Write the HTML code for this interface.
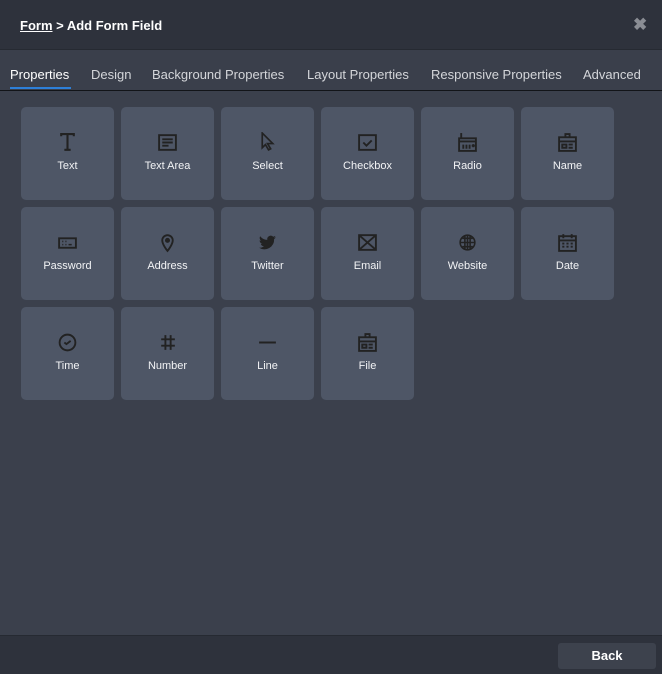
<!DOCTYPE html>
<html><head><meta charset="utf-8"><style>
*{margin:0;padding:0;box-sizing:border-box}
body{width:662px;height:674px;background:#3b404c;font-family:"Liberation Sans",sans-serif;position:relative;overflow:hidden}
.hd{position:absolute;left:0;top:0;width:662px;height:50px;background:#2e323c;border-bottom:1px solid #262a32}
.hd .t{position:absolute;left:20px;top:18px;color:#fff;font-weight:bold;font-size:13px}
.hd .t u{text-decoration:underline}
.x{position:absolute;left:633px;top:15px;color:#8a8d94;font-size:17px;font-weight:bold}
.tabs{position:absolute;left:0;top:50px;width:662px;height:41px;border-bottom:1px solid #121418;background:#3a3f4b}
.tab{position:absolute;top:17px;color:#d4d6da;font-size:13px}
.tab.a{color:#fff}
.ul{position:absolute;left:10px;top:87px;width:61px;height:2px;background:#2d7fd8}
.tile{position:absolute;width:93px;height:93px;background:#4e5666;border-radius:5px}
.tile svg{position:absolute;left:36px;top:25px;width:21px;height:21px}
.tile span{position:absolute;left:0;right:0;top:53px;text-align:center;color:#f2f3f5;font-size:11px}
.ft{position:absolute;left:0;top:635px;width:662px;height:39px;background:#2e323c;border-top:1px solid #262a32}
.bk{position:absolute;left:558px;top:7px;width:98px;height:26px;background:#3d424d;border-radius:3px;color:#fff;font-weight:bold;font-size:13px;text-align:center;line-height:26px}
</style></head><body>
<div class="hd"><div class="t"><u>Form</u> &gt; Add Form Field</div><div class="x">✖</div></div>
<div class="tabs">
<div class="tab a" style="left:10px">Properties</div>
<div class="tab" style="left:91px">Design</div>
<div class="tab" style="left:152px">Background Properties</div>
<div class="tab" style="left:307px">Layout Properties</div>
<div class="tab" style="left:431px">Responsive Properties</div>
<div class="tab" style="left:583px">Advanced</div>
</div>
<div class="ul"></div>

<div class="tile" style="left:21px;top:107px"><svg viewBox="0 0 20 20" fill="none" stroke="#222" stroke-width="2"><path d="M4 4V2h12v2M10 2v15M7 17h6"/></svg><span>Text</span></div>
<div class="tile" style="left:121px;top:107px"><svg viewBox="0 0 20 20" fill="none" stroke="#222" stroke-width="1.8"><rect x="2" y="3" width="16" height="14"/><path d="M5 7h10M5 10h10M5 13h6"/></svg><span>Text Area</span></div>
<div class="tile" style="left:221px;top:107px"><svg viewBox="0 0 20 20" fill="none" stroke="#222" stroke-width="1.6"><path d="M5 1v14l3-3 3 5 2-1-3-5h5z"/></svg><span>Select</span></div>
<div class="tile" style="left:321px;top:107px"><svg viewBox="0 0 20 20" fill="none" stroke="#222" stroke-width="1.8"><rect x="2" y="3" width="16" height="14"/><path d="M6 10l3 3 5-5"/></svg><span>Checkbox</span></div>
<div class="tile" style="left:421px;top:107px"><svg viewBox="0 0 20 20" fill="none" stroke="#222" stroke-width="1.8"><path d="M4 1v5"/><rect x="2" y="6" width="16" height="12"/><path d="M2 9h16M6 12v4M9 12v4M12 12v4M14 13h3M15.5 11.5v3"/></svg><span>Radio</span></div>
<div class="tile" style="left:521px;top:107px"><svg viewBox="0 0 20 20" fill="none" stroke="#222" stroke-width="1.8"><rect x="2" y="5" width="16" height="13"/><path d="M8 5V2h4v3M2 9h16M5 12h4v3H5zM11 12h4M11 15h4"/></svg><span>Name</span></div>

<div class="tile" style="left:21px;top:207px"><svg viewBox="0 0 20 20" fill="none" stroke="#222" stroke-width="1.8"><rect x="2" y="6" width="16" height="9"/><path d="M5 9h1M8 9h1M5 12h1M8 12h1M11 12h3" stroke-width="1.5"/></svg><span>Password</span></div>
<div class="tile" style="left:121px;top:207px"><svg viewBox="0 0 20 20" fill="none" stroke="#222" stroke-width="1.8"><path d="M10 18s-5-6-5-10a5 5 0 0110 0c0 4-5 10-5 10z"/><circle cx="10" cy="8" r="1.5" fill="#222"/></svg><span>Address</span></div>
<div class="tile" style="left:221px;top:207px"><svg viewBox="0 0 20 20"><path fill="#222" d="M18 5c-.6.3-1.2.4-1.9.5.7-.4 1.2-1 1.4-1.8-.6.4-1.3.6-2.1.8A3.3 3.3 0 009.8 7.5 9.3 9.3 0 013 4a3.3 3.3 0 001 4.4c-.5 0-1-.2-1.5-.4 0 1.6 1.1 2.9 2.6 3.2-.5.1-1 .2-1.5.1.4 1.3 1.6 2.3 3.1 2.3A6.6 6.6 0 012 15a9.3 9.3 0 0014.3-8.3c.7-.5 1.2-1 1.7-1.7z"/></svg><span>Twitter</span></div>
<div class="tile" style="left:321px;top:207px"><svg viewBox="0 0 20 20" fill="none" stroke="#222" stroke-width="1.8"><rect x="2" y="3" width="16" height="14"/><path d="M2 3l16 14M18 3L2 17"/></svg><span>Email</span></div>
<div class="tile" style="left:421px;top:207px"><svg viewBox="0 0 20 20" fill="none" stroke="#222" stroke-width="1.5"><circle cx="10" cy="10" r="7"/><path d="M3 10h14M10 3v14M5 6h10M5 14h10M7.5 3.5v13M12.5 3.5v13"/></svg><span>Website</span></div>
<div class="tile" style="left:521px;top:207px"><svg viewBox="0 0 20 20" fill="none" stroke="#222" stroke-width="1.8"><rect x="2" y="4" width="16" height="14"/><path d="M6 2v4M14 2v4M2 8h16M5 11h2M9 11h2M13 11h2M5 14h2M9 14h2M13 14h2"/></svg><span>Date</span></div>

<div class="tile" style="left:21px;top:307px"><svg viewBox="0 0 20 20" fill="none" stroke="#222" stroke-width="1.8"><circle cx="10" cy="10" r="7.5"/><path d="M7 10l2 1.5 4-3"/></svg><span>Time</span></div>
<div class="tile" style="left:121px;top:307px"><svg viewBox="0 0 20 20" fill="none" stroke="#222" stroke-width="1.8"><path d="M8 3v14M13 3v14M4 7h13M4 13h13"/></svg><span>Number</span></div>
<div class="tile" style="left:221px;top:307px"><svg viewBox="0 0 20 20" fill="none" stroke="#222" stroke-width="1.8"><path d="M2 10h16"/></svg><span>Line</span></div>
<div class="tile" style="left:321px;top:307px"><svg viewBox="0 0 20 20" fill="none" stroke="#222" stroke-width="1.8"><rect x="2" y="5" width="16" height="13"/><path d="M8 5V2h4v3M2 9h16M5 12h4v3H5zM11 12h4M11 15h4"/></svg><span>File</span></div>

<div class="ft"><div class="bk">Back</div></div>
</body></html>
